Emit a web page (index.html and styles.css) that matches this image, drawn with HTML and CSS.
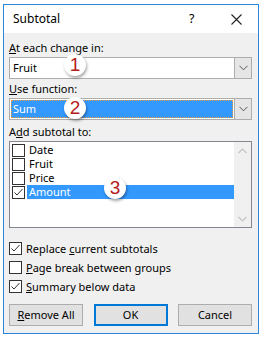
FILE: index.html
```html
<!DOCTYPE html>
<html>
<head>
<meta charset="utf-8">
<link rel="stylesheet" href="styles.css">
</head>
<body>
<div class="dialog">
  <div class="titlebar">
    <span class="title">Subtotal</span>
    <span class="help">?</span>
    <svg class="close" width="11" height="11" viewBox="0 0 11 11"><path d="M0.5 0.5 L10.5 10.5 M10.5 0.5 L0.5 10.5" stroke="#222" stroke-width="1.1" fill="none"/></svg>
  </div>
  <div class="content">
    <div class="label l1"><u>A</u>t each change in:</div>
    <div class="combo">
      <div class="combo-text">Fruit</div>
      <div class="combo-btn"><svg width="9" height="6" viewBox="0 0 9 6"><path d="M0.5 0.8 L4.5 4.8 L8.5 0.8" stroke="#555" stroke-width="1" fill="none"/></svg></div>
    </div>
    <div class="label l2"><u>U</u>se function:</div>
    <div class="combo combo2">
      <div class="combo-text sel"><span>Sum</span></div>
      <div class="combo-btn"><svg width="9" height="6" viewBox="0 0 9 6"><path d="M0.5 0.8 L4.5 4.8 L8.5 0.8" stroke="#555" stroke-width="1" fill="none"/></svg></div>
    </div>
    <div class="label l3">A<u>d</u>d subtotal to:</div>
    <div class="listbox">
      <div class="items">
        <div class="item"><span class="cb"></span><span class="it">Date</span></div>
        <div class="item"><span class="cb"></span><span class="it">Fruit</span></div>
        <div class="item"><span class="cb"></span><span class="it">Price</span></div>
        <div class="item"><span class="cb checked"><svg width="13" height="13" viewBox="0 0 13 13"><path d="M2.5 6.5 L5 9 L10.5 3" stroke="#333" stroke-width="1" fill="none"/></svg></span><span class="it active">Amount</span></div>
      </div>
      <div class="scroll">
        <svg width="9" height="6" viewBox="0 0 9 6"><path d="M0.5 5 L4.5 1 L8.5 5" stroke="#c4c4c4" stroke-width="1.2" fill="none"/></svg>
        <svg width="9" height="6" viewBox="0 0 9 6"><path d="M0.5 1 L4.5 5 L8.5 1" stroke="#c4c4c4" stroke-width="1.2" fill="none"/></svg>
      </div>
    </div>
    <div class="checks">
      <div class="check"><span class="cb2"><svg width="13" height="13" viewBox="0 0 13 13"><path d="M2.5 6.5 L5 9 L10.5 3" stroke="#333" stroke-width="1" fill="none"/></svg></span><span>Replace <u>c</u>urrent subtotals</span></div>
      <div class="check"><span class="cb2"></span><span><u>P</u>age break between groups</span></div>
      <div class="check"><span class="cb2"><svg width="13" height="13" viewBox="0 0 13 13"><path d="M2.5 6.5 L5 9 L10.5 3" stroke="#333" stroke-width="1" fill="none"/></svg></span><span><u>S</u>ummary below data</span></div>
    </div>
    <div class="buttons">
      <div class="btn"><u>R</u>emove All</div>
      <div class="btn ok">OK</div>
      <div class="btn">Cancel</div>
    </div>
    <div class="badge b1">1</div>
    <div class="badge b2">2</div>
    <div class="badge b3">3</div>
  </div>
</div>
</body>
</html>
```
FILE: styles.css
```css
html, body {
  margin: 0;
  padding: 0;
  background: #ffffff;
}
body {
  font-family: "Noto Sans", "Open Sans", sans-serif;
  font-size: 11px;
  line-height: 14px;
  color: #000;
}
.dialog {
  margin: 4px 0 0 3px;
  width: 254px;
  border: 1px solid #2e86d8;
  background: #f0f0f0;
}
.titlebar {
  height: 28px;
  background: #ffffff;
  display: flex;
  align-items: center;
  position: relative;
}
.title {
  font-size: 12px;
  margin-left: 9px;
  color: #000;
}
.help {
  position: absolute;
  left: 185px;
  top: 7px;
  font-size: 12.5px;
}
.close {
  position: absolute;
  left: 227px;
  top: 9px;
}
.content {
  position: relative;
  padding: 0 6px 0 5px;
  height: 300px;
}
.label {
  line-height: 16px;
  height: 16px;
}
.l1 { padding-top: 7px; }
.l2 { margin-top: 2px; }
.l3 { margin-top: 4px; }
.combo {
  margin-top: 1px;
  height: 20px;
  border: 1px solid #adadad;
  background: #fff;
  display: flex;
}
.combo2 {
  margin-top: 1px;
}
.combo-text {
  flex: 1;
  line-height: 20px;
  padding-left: 3px;
}
.combo-text.sel {
  padding: 1px;
  line-height: 16px;
}
.combo-text.sel span {
  display: block;
  height: 16px;
  background: #3399ff;
  color: #fff;
  padding-left: 1px;
  border: 1px dotted #f29a3a;
}
.combo-btn {
  width: 16px;
  border-left: 1px solid #adadad;
  background: #e5e5e5;
  display: flex;
  align-items: center;
  justify-content: center;
}
.listbox {
  margin-top: 1px;
  height: 85px;
  border: 1px solid #828790;
  background: #fff;
  display: flex;
}
.items {
  flex: 1;
  padding: 1px 0 0 2px;
}
.item {
  height: 14px;
  display: flex;
  align-items: center;
}
.cb {
  width: 11px;
  height: 11px;
  border: 1px solid #333;
  background: #fff;
  margin-right: 2px;
  position: relative;
}
.cb svg, .cb2 svg {
  position: absolute;
  left: -1px;
  top: -1px;
}
.it {
  flex: 1;
  line-height: 14px;
  height: 14px;
  padding-left: 2px;
}
.it.active {
  background: #3399ff;
  color: #fff;
}
.scroll {
  width: 17px;
  background: #f0f0f0;
  display: flex;
  flex-direction: column;
  justify-content: space-between;
  align-items: center;
  padding: 6px 0 5px;
}
.checks {
  padding-top: 11px;
}
.check {
  height: 19px;
  display: flex;
  align-items: center;
}
.cb2 {
  width: 11px;
  height: 11px;
  border: 1px solid #333;
  background: #fff;
  margin-right: 4px;
  position: relative;
}
.buttons {
  margin-top: 8px;
  display: flex;
  justify-content: space-between;
}
.btn {
  width: 72px;
  height: 20px;
  border: 1px solid #adadad;
  background: #e1e1e1;
  text-align: center;
  line-height: 20px;
}
.btn.ok {
  width: 70px;
  height: 18px;
  line-height: 18px;
  border: 2px solid #0078d7;
}
.badge {
  position: absolute;
  width: 22px;
  height: 22px;
  border-radius: 50%;
  background: #fff;
  box-shadow: 1px 2px 3px rgba(0,0,0,0.35);
  color: #b51c1c;
  font-family: "Liberation Sans", Arial, sans-serif;
  font-size: 19px;
  line-height: 22px;
  text-align: center;
}
.b1 { left: 60px; top: 21px; }
.b2 { left: 60px; top: 64px; }
.b3 { left: 100px; top: 144px; }
```
